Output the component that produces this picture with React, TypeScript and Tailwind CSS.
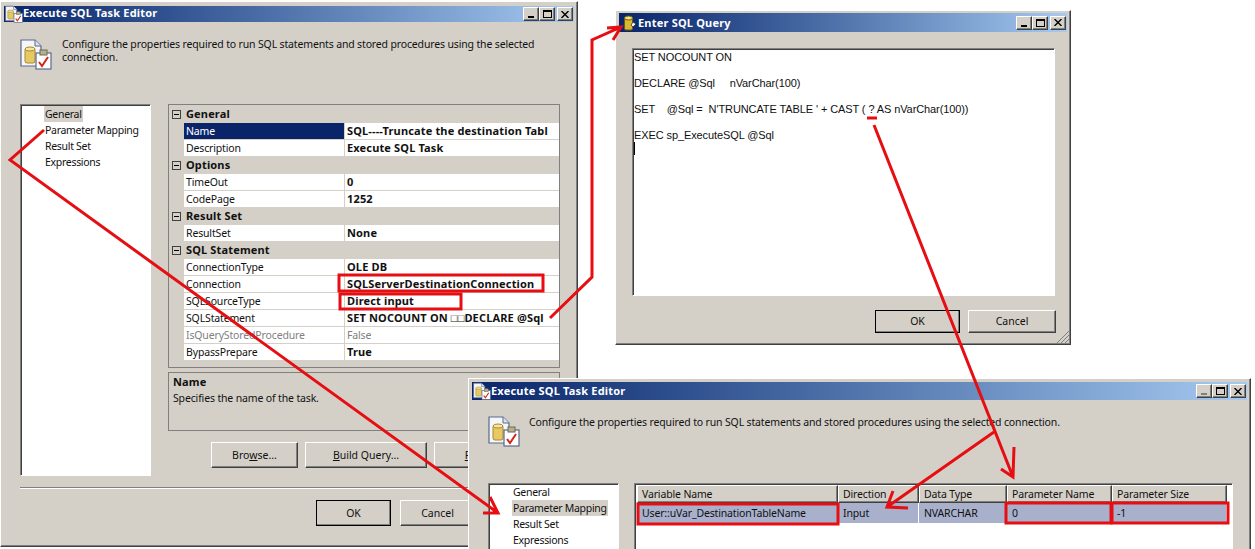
import type { ReactNode } from "react";

const bevel =
  "border border-t-white border-l-white border-r-[#404040] border-b-[#404040] shadow-[inset_-1px_-1px_0_#808080]";
const sunken =
  "border border-t-[#808080] border-l-[#808080] border-r-white border-b-white shadow-[inset_1px_1px_0_#404040]";
const bold = "font-bold text-[11px] tracking-[0.15px]";

const rows: { name?: string; value?: string; section?: string; dim?: boolean; selected?: boolean }[] = [
  { section: "General" },
  { name: "Name", value: "SQL----Truncate the destination Tabl", selected: true },
  { name: "Description", value: "Execute SQL Task" },
  { section: "Options" },
  { name: "TimeOut", value: "0" },
  { name: "CodePage", value: "1252" },
  { section: "Result Set" },
  { name: "ResultSet", value: "None" },
  { section: "SQL Statement" },
  { name: "ConnectionType", value: "OLE DB" },
  { name: "Connection", value: "SQLServerDestinationConnection" },
  { name: "SQLSourceType", value: "Direct input" },
  { name: "SQLStatement", value: "SET NOCOUNT ON □□DECLARE @Sql" },
  { name: "IsQueryStoredProcedure", value: "False", dim: true },
  { name: "BypassPrepare", value: "True" },
];

const navItems = ["General", "Parameter Mapping", "Result Set", "Expressions"];

const columns = [
  { title: "Variable Name", value: "User::uVar_DestinationTableName", w: "w-[201px]" },
  { title: "Direction", value: "Input", w: "w-[81px]" },
  { title: "Data Type", value: "NVARCHAR", w: "w-[88px]" },
  { title: "Parameter Name", value: "0", w: "w-[105px]" },
  { title: "Parameter Size", value: "-1", w: "w-[115px]" },
];

function TaskIcon({ small }: { small?: boolean }) {
  return (
    <svg width={small ? 18 : 32} height={small ? 18 : 32} viewBox="0 0 32 32" className="shrink-0">
      <path d="M1 2h14l6 6v20H1z" fill="#f4f6fb" stroke="#5a6a8a" strokeWidth="1.2" />
      <path d="M15 2v6h6" fill="#dfe4ee" stroke="#5a6a8a" strokeWidth="1" />
      <rect x="5" y="10" width="10" height="15" rx="2" fill="#e8c860" stroke="#a88a30" />
      <ellipse cx="10" cy="11" rx="5" ry="2" fill="#f6e6a0" stroke="#a88a30" />
      <rect x="16" y="15" width="15" height="16" fill="#fff" stroke="#5a6a8a" strokeWidth="1.2" />
      <rect x="20" y="12" width="7" height="5" fill="#b8b090" stroke="#6a6a50" />
      <path d="M19 24l3 4 6-9" fill="none" stroke="#d02818" strokeWidth="2" />
    </svg>
  );
}

function QueryIcon() {
  return (
    <svg width="15" height="16" viewBox="0 0 15 16" className="shrink-0 ml-[3px]">
      <rect x="1.5" y="2" width="8" height="13" rx="1.5" fill="#d8b830" stroke="#6a5a10" />
      <ellipse cx="5.5" cy="3" rx="4" ry="2" fill="#f0e080" stroke="#6a5a10" />
      <path d="M10 7l3 2-3 3-2-2z" fill="#f0f0f0" stroke="#303030" strokeWidth="0.8" />
    </svg>
  );
}

function CaptionButtons({ dimMin }: { dimMin?: boolean }) {
  return (
    <div className="flex items-center">
      <div className={`w-4 h-[14px] bg-[#d4d0c8] flex items-end justify-center pb-[2px] ${bevel}`}>
        <div className={`w-[6px] h-[2px] ${dimMin ? "bg-[#808080]" : "bg-black"}`} />
      </div>
      <div className={`w-4 h-[14px] bg-[#d4d0c8] flex items-center justify-center ${bevel}`}>
        <div className="w-[9px] h-[8px] border border-t-2 border-black" />
      </div>
      <div className={`ml-[2px] w-4 h-[14px] bg-[#d4d0c8] flex items-center justify-center ${bevel}`}>
        <svg width="8" height="7" viewBox="0 0 8 7">
          <path d="M0.5 0l7 7M7.5 0l-7 7" stroke="#000" strokeWidth="1.4" />
        </svg>
      </div>
    </div>
  );
}

function TitleBar({
  icon,
  title,
  h,
  textClass = "",
  dimMin,
}: {
  icon: ReactNode;
  title: string;
  h: string;
  textClass?: string;
  dimMin?: boolean;
}) {
  return (
    <div className={`flex items-center ${h} px-[1px] bg-gradient-to-r from-[#0a246a] to-[#a6caf0] shrink-0`}>
      {icon}
      <span className={`flex-1 font-bold text-white text-[11px] tracking-[0.2px] ${textClass}`}>{title}</span>
      <CaptionButtons dimMin={dimMin} />
    </div>
  );
}

function DialogButton({
  children,
  w,
  h = "h-[26px] pt-[2px]",
  primary,
}: {
  children: ReactNode;
  w: string;
  h?: string;
  primary?: boolean;
}) {
  return (
    <div
      className={`${w} ${h} flex items-center justify-center tracking-normal bg-[#d4d0c8] shrink-0 ${bevel} ${
        primary ? "outline outline-1 outline-offset-[-1px] outline-black" : ""
      }`}
    >
      {children}
    </div>
  );
}

function NavList({ active, className }: { active: string; className: string }) {
  return (
    <div className={`bg-white pl-[23px] shrink-0 tracking-[-0.3px] ${sunken} ${className}`}>
      {navItems.map((item) => (
        <div key={item} className="h-4 leading-4 flex">
          <span className={`px-[1px] ${item === active ? "bg-[#d4d0c8]" : ""}`}>{item}</span>
        </div>
      ))}
    </div>
  );
}

function PropertyGrid() {
  return (
    <div className="h-[264px] bg-[#d4d0c8] border border-[#808080] pt-[1px] overflow-hidden">
      {rows.map((row) =>
        row.section ? (
          <div key={row.section} className={`h-[17px] flex items-center ${bold}`}>
            <div className="w-[15px] flex justify-center">
              <div className="w-[9px] h-[9px] border border-[#404040] flex items-center justify-center">
                <div className="w-[5px] h-[1px] bg-black" />
              </div>
            </div>
            <span className="ml-[2px]">{row.section}</span>
          </div>
        ) : (
          <div key={row.name} className="h-[17px] flex ml-[15px] bg-white border-b border-[#d4d0c8]">
            <div
              className={`w-[161px] pl-[2px] border-r border-[#d4d0c8] leading-4 ${
                row.selected ? "bg-[#0a246a] text-white" : ""
              } ${row.dim ? "text-[#808080]" : ""}`}
            >
              {row.name}
            </div>
            <div
              className={`flex-1 pl-[2px] leading-4 whitespace-nowrap overflow-hidden ${
                row.dim ? "text-[#808080]" : bold
              }`}
            >
              {row.value}
            </div>
          </div>
        ),
      )}
    </div>
  );
}

function MainEditor() {
  return (
    <div className={`absolute left-0 top-[1px] w-[578px] h-[546px] bg-[#d4d0c8] px-[3px] pt-[4px] ${bevel}`}>
      <TitleBar icon={<TaskIcon small />} title="Execute SQL Task Editor" h="h-4" textClass="pb-[1px]" />
      <div className="flex items-start pl-4 pt-4 h-[82px]">
        <TaskIcon />
        <p className="ml-[10px] leading-[13px]">
          Configure the properties required to run SQL statements and stored procedures using the selected
          <br />
          connection.
        </p>
      </div>
      <div className="flex pl-4 pr-[14px]">
        <NavList active="General" className="w-[131px] h-[372px] pt-[1px]" />
        <div className="ml-[17px] flex-1 flex flex-col">
          <PropertyGrid />
          <div className="mt-1 h-[59px] border border-[#808080] px-[4px] py-[1px] leading-4">
            <div className={bold}>Name</div>
            <div>Specifies the name of the task.</div>
          </div>
          <div className="mt-[11px] pl-[43px] flex gap-[7px]">
            <DialogButton w="w-[87px]">
              <span>
                Bro<u>w</u>se...
              </span>
            </DialogButton>
            <DialogButton w="w-[122px]">
              <span>
                <u>B</u>uild Query...
              </span>
            </DialogButton>
            <DialogButton w="w-[122px]">
              <span>
                <u>P</u>arse Query
              </span>
            </DialogButton>
          </div>
        </div>
      </div>
      <div className="ml-4 mr-[14px] mt-[11px] h-[2px] border-t border-[#808080] bg-white" />
      <div className="mt-[11px] pl-[312px] flex gap-[9px]">
        <DialogButton w="w-[75px]" primary>
          OK
        </DialogButton>
        <DialogButton w="w-[75px]">Cancel</DialogButton>
        <DialogButton w="w-[75px]">Help</DialogButton>
      </div>
    </div>
  );
}

function QueryDialog() {
  return (
    <div className={`absolute left-[615px] top-[10px] w-[456px] h-[335px] bg-[#d4d0c8] px-[3px] pt-[2px] ${bevel}`}>
      <TitleBar icon={<QueryIcon />} title="Enter SQL Query" h="h-[19px]" textClass="pt-[1px]" />
      <div
        className={`ml-[13px] mt-[16px] w-[423px] h-[248px] bg-white pl-[1px] pt-[2px] font-['Liberation_Sans',sans-serif] text-[11px] tracking-[-0.1px] leading-[13px] text-[#101010] ${sunken}`}
      >
        <p>SET NOCOUNT ON</p>
        <p className="mt-[13px] whitespace-pre">DECLARE @Sql     nVarChar(100)</p>
        <p className="mt-[13px] whitespace-pre">SET    @Sql =  N'TRUNCATE TABLE ' + CAST ( ? AS nVarChar(100))</p>
        <p className="mt-[13px]">EXEC sp_ExecuteSQL @Sql</p>
        <div className="w-[1px] h-[13px] bg-black" />
      </div>
      <div className="mt-[14px] pl-[256px] flex gap-[8px]">
        <DialogButton w="w-[85px]" h="h-[23px]" primary>
          OK
        </DialogButton>
        <DialogButton w="w-[88px]" h="h-[23px]">
          Cancel
        </DialogButton>
      </div>
      <svg className="absolute right-[1px] bottom-[1px]" width="14" height="14" viewBox="0 0 14 14" stroke="#808080">
        <path d="M2 14L14 2M6 14L14 6M10 14L14 10" />
      </svg>
    </div>
  );
}

function MappingEditor() {
  return (
    <div className={`absolute left-[468px] top-[378px] w-[783px] h-[180px] bg-[#d4d0c8] p-[3px] ${bevel}`}>
      <TitleBar icon={<TaskIcon small />} title="Execute SQL Task Editor" h="h-[18px]" dimMin />
      <div className="flex items-start pl-4 pt-[15px] h-[83px]">
        <TaskIcon />
        <p className="ml-[9px] mt-[1px] leading-[13px]">
          Configure the properties required to run SQL statements and stored procedures using the selected connection.
        </p>
      </div>
      <div className="flex pl-[16px]">
        <NavList active="Parameter Mapping" className="w-[131px] h-[72px]" />
        <div className={`ml-[15px] w-[599px] h-[72px] bg-white pl-[2px] pt-[1px] ${sunken}`}>
          <div className="flex bg-white">
            {columns.map((col) => (
              <div key={col.title} className={`${col.w} h-[18px] pl-[4px] leading-[16px] bg-[#d4d0c8] ${bevel}`}>
                {col.title}
              </div>
            ))}
          </div>
          <div className="flex">
            {columns.map((col) => (
              <div
                key={col.title}
                className={`${col.w} h-[20px] pl-[5px] leading-[20px] bg-[#a8b0cc] border-r border-white`}
              >
                {col.value}
              </div>
            ))}
          </div>
        </div>
      </div>
    </div>
  );
}

function Annotations() {
  return (
    <svg
      className="absolute left-0 top-0 pointer-events-none"
      width="1255"
      height="549"
      fill="none"
      stroke="#e60e12"
      strokeWidth="3"
    >
      <rect x="339" y="275" width="204" height="16" />
      <rect x="340" y="294" width="121" height="15" />
      <rect x="638" y="504" width="200" height="20" />
      <rect x="1006" y="503" width="105" height="20" />
      <rect x="1112" y="503" width="116" height="20" />
      <path d="M44 130L10 160L498 513M483 513L498 513L490 497" />
      <path d="M550 318L592 277V40L621 27M607 28L621 27L613 40" />
      <path d="M867 118H877" />
      <path d="M874 125L1013 477M1001 469L1013 477L1014 447" />
      <path d="M994 432L887 507M908 508L887 507L893 491" />
    </svg>
  );
}

export default function App() {
  return (
    <div className="relative w-[1255px] h-[549px] overflow-hidden bg-white font-['Noto_Sans',sans-serif] text-[10.5px] tracking-[-0.15px] text-[#111]">
      <MainEditor />
      <QueryDialog />
      <MappingEditor />
      <Annotations />
    </div>
  );
}
